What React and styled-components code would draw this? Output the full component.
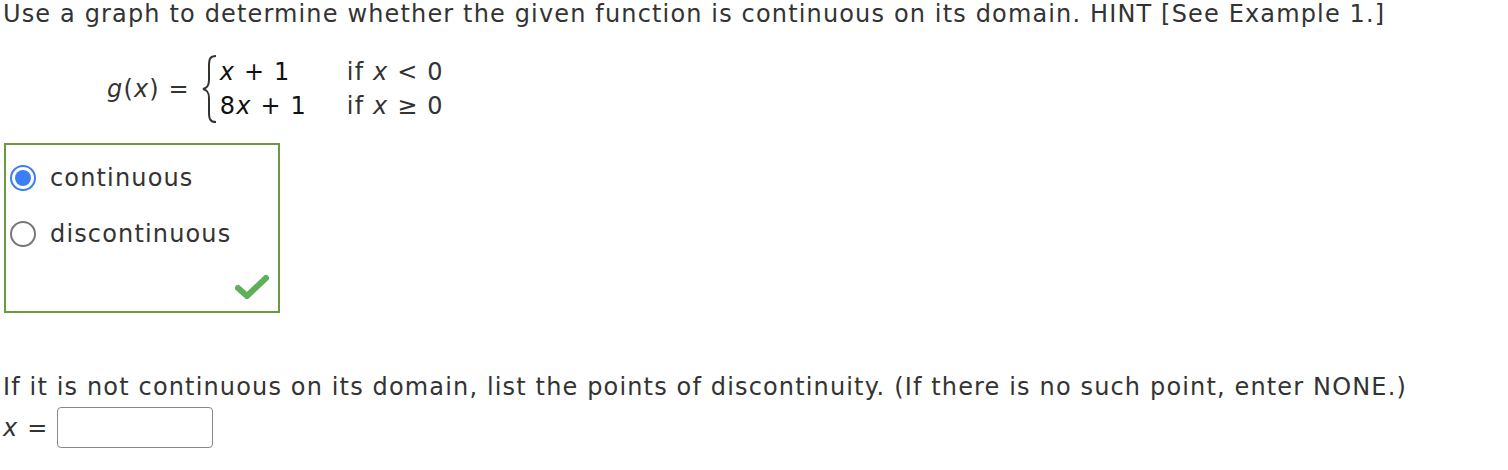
import React from 'react'
import styled, { createGlobalStyle } from 'styled-components'

const Global = createGlobalStyle`
  body {
    margin: 0;
    background: #fff;
    font-family: "DejaVu Sans", Verdana, sans-serif;
    color: #333;
  }
`

const Page = styled.div`
  width: 1508px;
  height: 470px;
  padding: 0 0 0 3px;
  box-sizing: border-box;
  font-size: 24px;
  letter-spacing: 1.15px;
`

const Prompt = styled.div`
  line-height: 28px;
  height: 28px;
`

const FunctionRow = styled.div`
  display: flex;
  align-items: center;
  margin: 26px 0 0 104px;
  height: 70px;
`

const Name = styled.span`
  margin-right: 11px;
  i { font-style: italic; }
`

const Brace = styled.svg`
  width: 18px;
  height: 70px;
  margin-right: 1px;
`

const Cases = styled.div`
  display: grid;
  grid-template-columns: 127px auto;
  row-gap: 6px;
  line-height: 28px;
  i { font-style: italic; }
`

const Expr = styled.span`
  color: #111;
`

const ChoiceBox = styled.div`
  margin: 19px 0 0 1px;
  width: 276px;
  height: 170px;
  box-sizing: border-box;
  border: 2px solid #6b9a3e;
  position: relative;
  padding-top: 16px;
`

const Option = styled.label`
  display: flex;
  align-items: center;
  height: 34px;
  margin-bottom: 22px;
  margin-left: 4px;
`

const Radio = styled.span`
  width: 26px;
  height: 26px;
  box-sizing: border-box;
  border-radius: 50%;
  border: ${p => (p.checked ? '2px solid #3b7ef5' : '2px solid #777')};
  display: flex;
  align-items: center;
  justify-content: center;
  margin-right: 14px;
  &::after {
    content: '';
    width: 16px;
    height: 16px;
    border-radius: 50%;
    background: ${p => (p.checked ? '#3b7ef5' : 'transparent')};
  }
`

const Check = styled.svg`
  position: absolute;
  right: 9px;
  bottom: 12px;
  width: 34px;
  height: 26px;
`

const Question = styled.div`
  margin-top: 60px;
  line-height: 28px;
`

const AnswerRow = styled.div`
  display: flex;
  align-items: center;
  margin-top: 6px;
  i { font-style: italic; }
`

const Input = styled.div`
  margin-left: 9px;
  width: 156px;
  height: 41px;
  box-sizing: border-box;
  border: 1.5px solid #888;
  border-radius: 4px;
  background: #fff;
`

export default function App() {
  return (
    <Page>
      <Global />
      <Prompt>Use a graph to determine whether the given function is continuous on its domain. HINT [See Example 1.]</Prompt>
      <FunctionRow>
        <Name><i>g</i>(<i>x</i>) =</Name>
        <Brace viewBox="0 0 18 70">
          <path d="M15 2 C9 2 8 5 8 12 L8 26 C8 32 6 34 2 35 C6 36 8 38 8 44 L8 58 C8 65 9 68 15 68" fill="none" stroke="#333" strokeWidth="2" />
        </Brace>
        <Cases>
          <Expr><i>x</i> + 1</Expr>
          <span>if <i>x</i> &lt; 0</span>
          <Expr>8<i>x</i> + 1</Expr>
          <span>if <i>x</i> ≥ 0</span>
        </Cases>
      </FunctionRow>
      <ChoiceBox>
        <Option><Radio checked />continuous</Option>
        <Option><Radio />discontinuous</Option>
        <Check viewBox="0 0 34 26">
          <path d="M3 15 L12 23 L31 5" fill="none" stroke="#5fb058" strokeWidth="6" strokeLinecap="round" strokeLinejoin="round" />
        </Check>
      </ChoiceBox>
      <Question>If it is not continuous on its domain, list the points of discontinuity. (If there is no such point, enter NONE.)</Question>
      <AnswerRow>
        <i>x</i>&nbsp;=
        <Input />
      </AnswerRow>
    </Page>
  )
}
